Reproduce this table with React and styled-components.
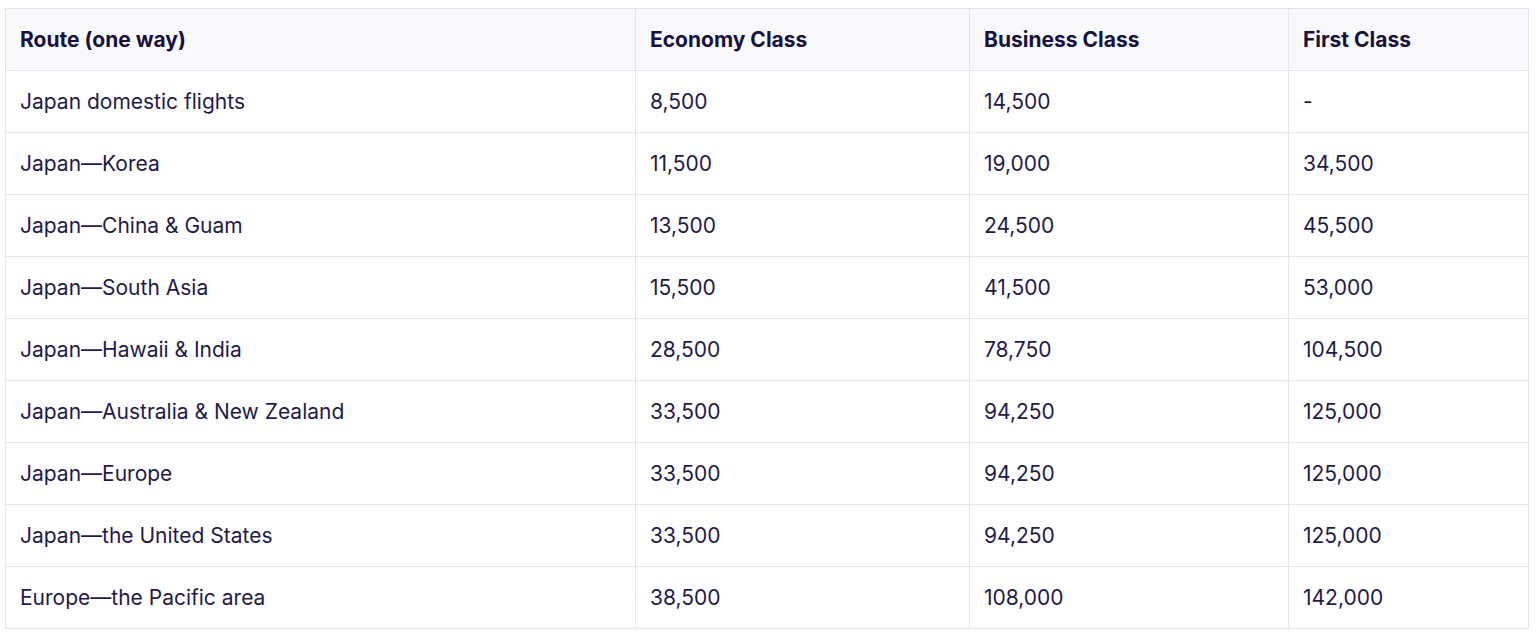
import React from 'react'
import styled, { createGlobalStyle } from 'styled-components'

const GlobalStyle = createGlobalStyle`
  html, body {
    margin: 0;
    padding: 0;
    background: #ffffff;
  }
  body {
    font-family: 'Inter', 'Noto Sans', sans-serif;
  }
`;

const Page = styled.div`
  padding: 8px 9px 6px 5px;
`;

const Table = styled.table`
  width: 1523px;
  border-collapse: collapse;
  table-layout: fixed;
  border: 1px solid #e6e5ef;
  color: #1f1a4a;
`;

const HeadCell = styled.th`
  box-sizing: border-box;
  width: ${(p) => p.$w}px;
  height: 62px;
  padding: 0 14px;
  text-align: left;
  font-size: 21px;
  font-weight: 700;
  letter-spacing: 0;
  color: #16113e;
  background: #f9f9fb;
  border: 1px solid #e6e5ef;
`;

const Cell = styled.td`
  box-sizing: border-box;
  height: 62px;
  padding: 0 14px;
  font-size: 21px;
  font-weight: 400;
  letter-spacing: 0;
  border: 1px solid #e6e5ef;
`;

const rows = [
  ['Japan domestic flights', '8,500', '14,500', '-'],
  ['Japan\u2014Korea', '11,500', '19,000', '34,500'],
  ['Japan\u2014China & Guam', '13,500', '24,500', '45,500'],
  ['Japan\u2014South Asia', '15,500', '41,500', '53,000'],
  ['Japan\u2014Hawaii & India', '28,500', '78,750', '104,500'],
  ['Japan\u2014Australia & New Zealand', '33,500', '94,250', '125,000'],
  ['Japan\u2014Europe', '33,500', '94,250', '125,000'],
  ['Japan\u2014the United States', '33,500', '94,250', '125,000'],
  ['Europe\u2014the Pacific area', '38,500', '108,000', '142,000'],
];

const columns = [
  { label: 'Route (one way)', w: 630 },
  { label: 'Economy Class', w: 334 },
  { label: 'Business Class', w: 319 },
  { label: 'First Class', w: 240 },
];

export default function App() {
  return (
    <Page>
      <GlobalStyle />
      <Table>
        <thead>
          <tr>
            {columns.map((c) => (
              <HeadCell key={c.label} $w={c.w}>{c.label}</HeadCell>
            ))}
          </tr>
        </thead>
        <tbody>
          {rows.map((r) => (
            <tr key={r[0]}>
              {r.map((v, i) => (
                <Cell key={i}>{v}</Cell>
              ))}
            </tr>
          ))}
        </tbody>
      </Table>
    </Page>
  )
}
